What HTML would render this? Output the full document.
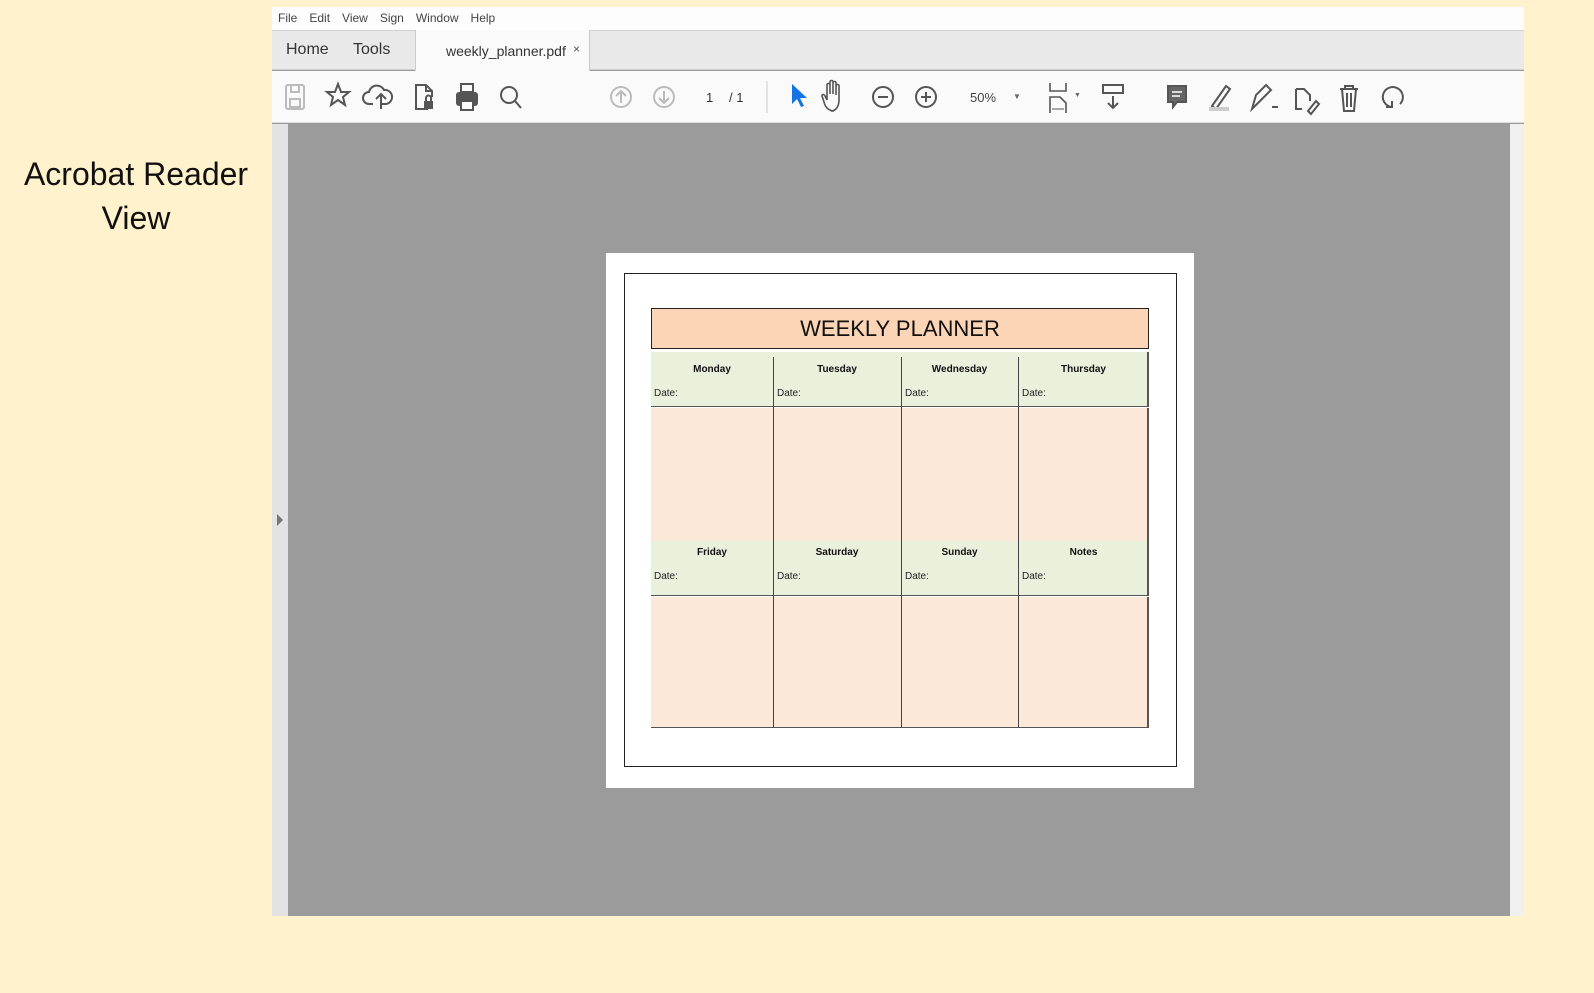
<!DOCTYPE html>
<html><head><meta charset="utf-8"><style>
*{margin:0;padding:0;box-sizing:border-box}
body{width:1594px;height:993px;background:#fff2cc;position:relative;overflow:hidden;font-family:"Liberation Sans",sans-serif}
.a{position:absolute}
.ttl{position:absolute;font-family:"Comic Sans MS","Liberation Sans",sans-serif;font-size:32px;color:#111;text-align:center;width:272px;left:0;top:152px;line-height:44px}
.menu span{margin-right:12px}
.day{position:absolute;font-size:10px;font-weight:bold;color:#111;text-align:center}
.dt{position:absolute;font-size:10px;color:#222}
</style></head><body>
<div class="ttl">Acrobat Reader<br>View</div>

<div class="a" style="left:272px;top:7px;width:1252px;height:909px;background:#9b9b9b"></div>
<div class="a menu" style="left:272px;top:7px;width:1252px;height:23px;background:#fdfdfd;font-size:12px;color:#444;padding:4px 0 0 6px"><span>File</span><span>Edit</span><span>View</span><span>Sign</span><span>Window</span><span>Help</span></div>
<div class="a" style="left:272px;top:30px;width:1252px;height:40px;background:#e9e9e9;border-top:1px solid #d0d0d0;border-bottom:1px solid #cfcfcf"></div>
<div class="a" style="left:286px;top:41px;font-size:16px;color:#333">Home</div>
<div class="a" style="left:353px;top:41px;font-size:16px;color:#333">Tools</div>
<div class="a" style="left:415px;top:30px;width:175px;height:41px;background:#fafafa;border-left:1px solid #ccc;border-right:1px solid #ccc"></div>
<div class="a" style="left:446px;top:43px;font-size:14px;color:#333">weekly_planner.pdf</div>
<div class="a" style="left:573px;top:42px;font-size:12px;color:#555">×</div>
<div class="a" style="left:272px;top:71px;width:1252px;height:52px;background:#fafafa;border-bottom:1px solid #ddd"></div>

<svg class="a" style="left:272px;top:71px" width="1252" height="52" fill="none" stroke="#555" stroke-width="2">
 <rect x="14" y="14" width="18" height="24" rx="2" stroke="#bbb"/><rect x="19" y="14" width="8" height="7" stroke="#bbb"/><rect x="18" y="28" width="10" height="8" stroke="#bbb"/>
 <path d="M66 13l3 8 8 0-6 5 2 8-7-5-7 5 2-8-6-5 8 0z"/>
 <path d="M101 33h-4a6 6 0 010-12 8 8 0 0115-2 6 6 0 012 14h-4M109 38v-14M104 28l5-5 5 5"/>
 <path d="M156 38h-12v-24h10l6 6v6M154 14v6h6"/><rect x="152" y="30" width="9" height="8" fill="#555" stroke="none"/><path d="M154 30v-3a2.5 2.5 0 015 0v3"/>
 <rect x="185" y="22" width="20" height="12" rx="2" fill="#555"/><rect x="189" y="13" width="12" height="8"/><rect x="189" y="30" width="12" height="9" fill="#fff"/>
 <circle cx="237" cy="24" r="8"/><path d="M243 30l6 7"/>
 <circle cx="349" cy="26" r="10" stroke="#bbb"/><path d="M349 32v-12M344 25l5-5 5 5" stroke="#bbb"/>
 <circle cx="392" cy="26" r="10" stroke="#bbb"/><path d="M392 20v12M387 27l5 5 5-5" stroke="#bbb"/>
 <path d="M495 10v32" stroke="#ccc" stroke-width="1"/>
 <path d="M520 13l0 20 5-5 4 8 3-1-4-8 7 0z" fill="#1473e6" stroke="none"/>
 <path d="M562 40c-5 0-9-4-10-9l-2-6c0-2 2-2 3 0l2 4v-15c0-2 3-2 3 0v9-12c0-2 3-2 3 0v12-11c0-2 3-2 3 0v12-9c0-2 3-2 3 0v14c0 6-3 11-8 11z" stroke-width="1.6"/>
 <circle cx="611" cy="26" r="10"/><path d="M606 26h10"/>
 <circle cx="654" cy="26" r="10"/><path d="M649 26h10M654 21v10"/>
 <path d="M778 12v8h16v-8M778 42v-16h10l6 6v10" stroke-width="1.6"/><path d="M780 38h12" stroke-width="1"/>
 <path d="M831 14h20v8h-20zM841 25v12M836 32l5 5 5-5"/>
 <path d="M896 15h18v16h-9l-4 5v-5h-5z" fill="#666"/><path d="M900 21h10M900 25h8" stroke="#fff" stroke-width="1.5"/>
 <path d="M940 35l14-20 4 3-14 20z"/><rect x="937" y="36" width="20" height="4" fill="#ccc" stroke="none"/>
 <path d="M980 38l4-14 10-10 5 5-10 10zM1000 36h6"/>
 <path d="M1024 18h8l6 6v6M1024 18v20h6M1036 40l8-10 3 3-8 10z"/>
 <path d="M1068 18h18M1073 18v-3h8v3M1070 18l2 22h10l2-22M1075 22v14M1079 22v14"/>
 <path d="M1128 33a10 10 0 10-8 3M1120 30v6h-6"/>
</svg>
<div class="a" style="left:706px;top:90px;font-size:13px;color:#333">1</div>
<div class="a" style="left:729px;top:90px;font-size:13px;color:#333">/ 1</div>
<div class="a" style="left:970px;top:90px;font-size:13px;color:#444">50%</div>
<div class="a" style="left:1013px;top:92px;font-size:8px;color:#666">▼</div>
<div class="a" style="left:1074px;top:92px;font-size:7px;color:#666">▼</div>

<div class="a" style="left:272px;top:124px;width:16px;height:792px;background:#e3e3e3"></div>
<div class="a" style="left:277px;top:514px;width:0;height:0;border-left:6px solid #777;border-top:6px solid transparent;border-bottom:6px solid transparent"></div>
<div class="a" style="left:1510px;top:124px;width:14px;height:792px;background:#f0f0f0"></div>

<div class="a" style="left:606px;top:253px;width:588px;height:535px;background:#fff"></div>
<div class="a" style="left:624px;top:273px;width:553px;height:494px;border:1.5px solid #222"></div>
<div class="a" style="left:651px;top:308px;width:498px;height:41px;background:#fbd5b5;border:1px solid #222;text-align:center;font-size:22px;line-height:40px;color:#111;font-family:'Comic Sans MS','Liberation Sans',sans-serif">WEEKLY PLANNER</div>
<div class="a" style="left:651px;top:352px;width:498px;height:55px;background:#e9f0dc;border-right:2px solid #555;border-bottom:1px solid #555"></div>
<div class="a" style="left:651px;top:408px;width:498px;height:133px;background:#fce8d9;border-right:2px solid #555"></div>
<div class="a" style="left:651px;top:541px;width:498px;height:55px;background:#e9f0dc;border-right:2px solid #555;border-bottom:1px solid #555"></div>
<div class="a" style="left:651px;top:597px;width:498px;height:131px;background:#fce8d9;border-right:2px solid #555;border-bottom:1.5px solid #555"></div>
<div class="a" style="left:773px;top:357px;width:1px;height:371px;background:#444"></div>
<div class="a" style="left:901px;top:357px;width:1px;height:371px;background:#444"></div>
<div class="a" style="left:1018px;top:357px;width:1px;height:371px;background:#444"></div>

<div class="day" style="left:651px;width:122px;top:364px">Monday</div>
<div class="day" style="left:773px;width:128px;top:364px">Tuesday</div>
<div class="day" style="left:901px;width:117px;top:364px">Wednesday</div>
<div class="day" style="left:1018px;width:131px;top:364px">Thursday</div>
<div class="dt" style="left:654px;top:388px">Date:</div><div class="dt" style="left:777px;top:388px">Date:</div><div class="dt" style="left:905px;top:388px">Date:</div><div class="dt" style="left:1022px;top:388px">Date:</div>
<div class="day" style="left:651px;width:122px;top:547px">Friday</div>
<div class="day" style="left:773px;width:128px;top:547px">Saturday</div>
<div class="day" style="left:901px;width:117px;top:547px">Sunday</div>
<div class="day" style="left:1018px;width:131px;top:547px">Notes</div>
<div class="dt" style="left:654px;top:571px">Date:</div><div class="dt" style="left:777px;top:571px">Date:</div><div class="dt" style="left:905px;top:571px">Date:</div><div class="dt" style="left:1022px;top:571px">Date:</div>
</body></html>
